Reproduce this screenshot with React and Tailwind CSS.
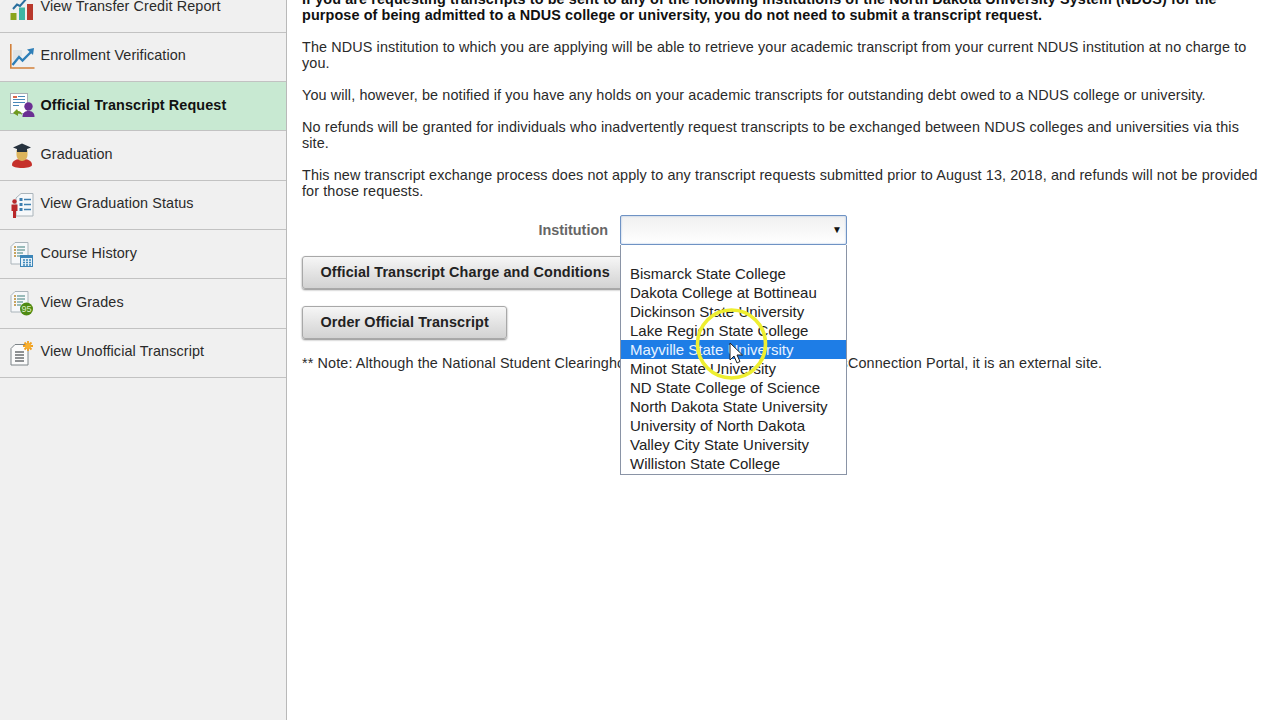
import React from "react";

function IconBars() {
  return (
    <svg width="26" height="24" viewBox="0 0 26 24">
      <rect x="0.5" y="14" width="6" height="7" fill="#8aa51c" />
      <rect x="9" y="8.5" width="6" height="12.5" fill="#3fb5a3" />
      <rect x="17" y="5" width="6" height="16" fill="#b8382c" />
      <path d="M3 10 L7 5.5 L10 7 L17 -1" stroke="#2a6f9e" strokeWidth="2" fill="none" />
    </svg>
  );
}
function IconChart() {
  return (
    <svg width="26" height="26" viewBox="0 0 26 26">
      <path d="M3 9 H12 M3 13 H8" stroke="#dfe3e6" strokeWidth="6" fill="none" />
      <path d="M0.8 0 V24 H24.5" stroke="#d2803a" strokeWidth="1.6" fill="none" />
      <path d="M2.5 21 L9 13 L12.5 16.5 L21 8" stroke="#2f7fb8" strokeWidth="2.4" fill="none" />
      <path d="M17 5.5 L24 4 L23 11 Z" fill="#2f7fb8" />
    </svg>
  );
}
function IconTranscript() {
  return (
    <svg width="26" height="26" viewBox="0 0 26 26">
      <rect x="0.5" y="0.5" width="17" height="20" fill="#fff" stroke="#a8b0b4" />
      <rect x="3" y="3" width="4" height="2" fill="#d9684c" />
      <path d="M8 3.5H15M3 6.5H15M3 9.5H15M3 12.5H9" stroke="#4a88b8" strokeWidth="1" />
      <path d="M3 20 L7 16 L8 18 C10 18 12 19 12 22 C11 20.5 10 20.5 8 20.5 L8 23 Z" fill="#6f9a20" />
      <circle cx="18.5" cy="13.5" r="4.2" fill="#6b2f93" />
      <path d="M12.5 24 C12.5 19 15.5 18 18.5 18 C21.5 18 24.5 19 24.5 24 Z" fill="#6b2f93" />
    </svg>
  );
}
function IconGrad() {
  return (
    <svg width="24" height="26" viewBox="0 0 24 26">
      <path d="M2 22 C2 17 7 16 12 16 C17 16 22 17 22 22 C22 26 2 26 2 22 Z" fill="#c5302a" />
      <path d="M6.5 7 H17.5 V12 C17.5 15 15 18 12 18 C9 18 6.5 15 6.5 12 Z" fill="#dcb45c" />
      <path d="M12 0.5 L21 4.5 L12 8 L3 4.5 Z" fill="#26323e" />
      <path d="M7 5 V9 H17 V5 Z" fill="#26323e" />
    </svg>
  );
}
function IconStatus() {
  return (
    <svg width="24" height="25" viewBox="0 0 24 25">
      <path d="M6 5 L11 0.5 H23 V23 H6 Z" fill="#f6f8fa" stroke="#aab4ba" />
      <rect x="9.5" y="5" width="3" height="3" fill="#3d7fb0" />
      <rect x="9.5" y="10" width="3" height="3" fill="#3d7fb0" />
      <rect x="9.5" y="15" width="3" height="3" fill="#3d7fb0" />
      <path d="M14 6.5H21M14 11.5H21M14 16.5H21" stroke="#3d7fb0" strokeWidth="1.4" />
      <circle cx="4.5" cy="8.5" r="2.2" fill="#b8282a" />
      <path d="M1.5 11.5 H7.5 V18 H6 V25 H3 V18 H1.5 Z" fill="#b8282a" />
    </svg>
  );
}
function IconHistory() {
  return (
    <svg width="24" height="25" viewBox="0 0 24 25">
      <path d="M1 4.5 L5 0.5 H18 V22 H1 Z" fill="#f6f8fa" stroke="#aab4ba" />
      <path d="M4 5H6M4 8H6M4 11H6M4 14H6" stroke="#b8862c" strokeWidth="1.4" />
      <path d="M7 5H15M7 8H15M7 11H13M7 14H11" stroke="#3d7f7a" strokeWidth="1.2" />
      <rect x="10.5" y="13.5" width="12" height="11" fill="#e6f1f8" stroke="#3d86b8" />
      <rect x="10.5" y="13.5" width="12" height="2.5" fill="#3d86b8" />
      <path d="M13 18H15M16 18H18M19 18H21M13 20.5H15M16 20.5H18M19 20.5H21M13 23H15M16 23H18M19 23H21" stroke="#3d86b8" strokeWidth="1.4" />
    </svg>
  );
}
function IconGrades() {
  return (
    <svg width="24" height="25" viewBox="0 0 24 25">
      <path d="M1 4.5 L5 0.5 H18 V21 H1 Z" fill="#f6f8fa" stroke="#aab4ba" />
      <path d="M4 5H6M4 8H6M4 11H6M4 14H6" stroke="#b8862c" strokeWidth="1.4" />
      <path d="M7 5H15M7 8H15M7 11H13M7 14H11" stroke="#3d7f7a" strokeWidth="1.2" />
      <circle cx="16.5" cy="18" r="6.5" fill="#4f8a14" />
      <text x="16.5" y="21" fontSize="9" fill="#dff0c8" textAnchor="middle" fontFamily="Liberation Sans">95</text>
    </svg>
  );
}
function IconUnofficial() {
  return (
    <svg width="24" height="25" viewBox="0 0 24 25">
      <path d="M1 7.5 L5 3.5 H18 V24 H1 Z" fill="#fbfbfb" stroke="#7c8488" />
      <path d="M5 11H14M5 14H14M5 17H14M5 20H14" stroke="#23282c" strokeWidth="1.2" />
      <g stroke="#f0a020" strokeWidth="1.8">
        <path d="M18 0 V10M13 5 H23M14.5 1.5 L21.5 8.5M21.5 1.5 L14.5 8.5" />
      </g>
      <circle cx="18" cy="5" r="2.8" fill="#f8b030" />
    </svg>
  );
}

const rows = [
  { h: "h-[33px]", label: "View Transfer Credit Report", icon: <IconBars />, off: "-mt-[10px]", textOff: "-mt-[21px]" },
  { h: "h-[49px]", label: "Enrollment Verification", icon: <IconChart />, textOff: "-mt-[4px]" },
  { h: "h-[49px]", label: "Official Transcript Request", icon: <IconTranscript />, active: true, textOff: "-mt-[2px]" },
  { h: "h-[50px]", label: "Graduation", icon: <IconGrad />, textOff: "-mt-[4px]" },
  { h: "h-[49px]", label: "View Graduation Status", icon: <IconStatus />, textOff: "-mt-[4px]" },
  { h: "h-[49px]", label: "Course History", icon: <IconHistory />, textOff: "-mt-[2px]" },
  { h: "h-[50px]", label: "View Grades", icon: <IconGrades />, textOff: "-mt-[4px]" },
  { h: "h-[49px]", label: "View Unofficial Transcript", icon: <IconUnofficial />, textOff: "-mt-[4px]" },
];

const options = [
  "",
  "Bismarck State College",
  "Dakota College at Bottineau",
  "Dickinson State University",
  "Lake Region State College",
  "Mayville State University",
  "Minot State University",
  "ND State College of Science",
  "North Dakota State University",
  "University of North Dakota",
  "Valley City State University",
  "Williston State College",
];

export default function App() {
  return (
    <div className="flex h-[720px] w-[1280px] overflow-hidden bg-white font-['Liberation_Sans',Arial,sans-serif] text-[14.4px] leading-[16px] tracking-[0.113px] text-[#2a2a2a]">
      <aside className="h-full w-[287px] shrink-0 border-r border-[#b9b9b9] bg-[#f0f0f0] tracking-[0.1px]">
        {rows.map((r) => (
          <div
            key={r.label}
            className={`flex ${r.h} items-center border-b border-[#c2c2c2] pl-[10px] ${r.active ? "bg-[#c8e9d2] font-bold text-[#111]" : ""}`}
          >
            <div className={`flex w-[30.5px] shrink-0 items-center justify-start ${r.off || ""}`}>{r.icon}</div>
            <span className={r.textOff}>{r.label}</span>
          </div>
        ))}
      </aside>
      <main className="relative flex-1 pl-[15px] pr-[15px]">
        <p className="-mt-[9px] font-bold text-[#111]">
          If you are requesting transcripts to be sent to any of the following institutions of the North Dakota University System (NDUS) for the purpose of being admitted to a NDUS college or university, you do not need to submit a transcript request.
        </p>
        <p className="mt-4">The NDUS institution to which you are applying will be able to retrieve your academic transcript from your current NDUS institution at no charge to you.</p>
        <p className="mt-4">You will, however, be notified if you have any holds on your academic transcripts for outstanding debt owed to a NDUS college or university.</p>
        <p className="mt-4">No refunds will be granted for individuals who inadvertently request transcripts to be exchanged between NDUS colleges and universities via this site.</p>
        <p className="mt-4">This new transcript exchange process does not apply to any transcript requests submitted prior to August 13, 2018, and refunds will not be provided for those requests.</p>

        <div className="mt-4 flex h-[30px] items-center">
          <span className="w-[306px] text-right font-bold tracking-normal text-[#666]">Institution</span>
          <div className="relative ml-[12px] h-[30px] w-[227px]">
            <div className="flex h-full items-center justify-end rounded-[2px] border border-[#6f93c4] bg-gradient-to-b from-[#f0f0f0] to-white pr-[4px] text-[10px] text-[#111] shadow-[inset_0_0_2px_#9db8dc]">
              ▼
            </div>
            <ul className="absolute left-0 top-[30px] z-10 h-[230px] w-[227px] border border-t-0 border-[#8a94a6] bg-white text-[15px] tracking-normal text-[#222]">
              {options.map((o, i) => (
                <li
                  key={i}
                  className={`h-[19px] pl-[9px] leading-[19px] ${i === 5 ? "bg-[#1e7de6] text-[#e8f3ff]" : ""}`}
                >
                  {o}
                </li>
              ))}
            </ul>
          </div>
        </div>

        <button className="mt-[11px] block h-[33px] w-[326px] rounded-[3px] border border-[#a8a8a8] bg-gradient-to-b from-[#f6f6f6] to-[#d2d2d2] pb-[2px] pl-[17.5px] text-left font-bold text-[#222] shadow-[0_1px_2px_#888]">
          Official Transcript Charge and Conditions
        </button>
        <button className="mt-[17px] block h-[33px] w-[205px] rounded-[3px] border border-[#a8a8a8] bg-gradient-to-b from-[#f6f6f6] to-[#d2d2d2] pb-[2px] pl-[17.5px] text-left font-bold text-[#222] shadow-[0_1px_2px_#888]">
          Order Official Transcript
        </button>
        <p className="mt-[16px]">
          ** Note: Although the National Student Clearinghouse site is accessed from CampusConnection Portal, it is an external site.
        </p>

        <svg className="absolute left-[403px] top-[300px] z-20" width="85" height="85" viewBox="0 0 85 85">
          <circle cx="41.5" cy="44" r="34" fill="none" stroke="#eeee30" strokeWidth="3.6" />
          <path d="M40 43 V60 L44 56 L47 63 L50 61.5 L47 55 H52.5 Z" fill="#fff" stroke="#222" strokeWidth="1" />
        </svg>
      </main>
    </div>
  );
}
